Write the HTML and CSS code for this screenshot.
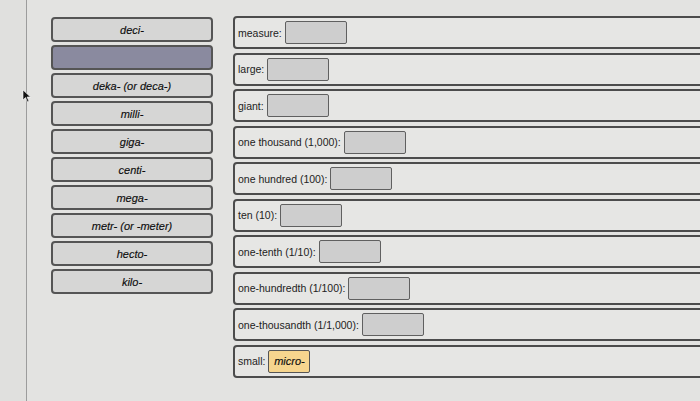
FILE: index.html
```html
<!DOCTYPE html>
<html>
<head>
<meta charset="utf-8">
<link rel="stylesheet" href="styles.css">
</head>
<body>
<div class="page">
  <div class="rail"></div>
  <div class="tiles">
    <div class="tile">deci-</div>
    <div class="tile dark"></div>
    <div class="tile">deka- (or deca-)</div>
    <div class="tile">milli-</div>
    <div class="tile">giga-</div>
    <div class="tile">centi-</div>
    <div class="tile">mega-</div>
    <div class="tile">metr- (or -meter)</div>
    <div class="tile">hecto-</div>
    <div class="tile">kilo-</div>
  </div>
  <div class="rows">
    <div class="row"><span class="label">measure:</span><span class="slot"></span></div>
    <div class="row"><span class="label">large:</span><span class="slot"></span></div>
    <div class="row"><span class="label">giant:</span><span class="slot"></span></div>
    <div class="row"><span class="label">one thousand (1,000):</span><span class="slot"></span></div>
    <div class="row"><span class="label">one hundred (100):</span><span class="slot"></span></div>
    <div class="row"><span class="label">ten (10):</span><span class="slot"></span></div>
    <div class="row"><span class="label">one-tenth (1/10):</span><span class="slot"></span></div>
    <div class="row"><span class="label">one-hundredth (1/100):</span><span class="slot"></span></div>
    <div class="row"><span class="label">one-thousandth (1/1,000):</span><span class="slot"></span></div>
    <div class="row"><span class="label">small:</span><span class="slot filled">micro-</span></div>
  </div>
</div>
<svg class="cursor" width="10" height="14" viewBox="0 0 10 14"><path d="M1 1 L1 11 L3.5 8.5 L5.5 13 L7 12.3 L5 8 L8.5 8 Z" fill="#111" stroke="#fff" stroke-width="0.6"/></svg>
</body>
</html>
```
FILE: styles.css
```css
html, body {
  margin: 0;
  padding: 0;
  background: #e3e3e1;
  overflow: hidden;
  width: 700px;
  height: 401px;
  font-family: "Liberation Sans", Arial, sans-serif;
  color: #1e1e1e;
}
.page {
  display: flex;
  align-items: flex-start;
  height: 401px;
  position: relative;
}
.rail {
  width: 26px;
  height: 401px;
  border-right: 1px solid #9c9c9c;
  background: #e0e0de;
  flex: none;
}
.tiles {
  margin-left: 24px;
  margin-top: 17px;
  width: 162px;
  display: flex;
  flex-direction: column;
  gap: 3px;
  flex: none;
}
.tile {
  height: 25px;
  box-sizing: border-box;
  border: 2px solid #555;
  border-radius: 4px;
  background: #d6d6d5;
  font-size: 11px;
  font-style: italic;
  color: #0e0e0e;
  display: flex;
  align-items: center;
  justify-content: center;
  -webkit-text-stroke: 0.15px #0e0e0e;
}
.tile.dark {
  background: #8a8a9f;
}
.rows {
  margin-left: 20px;
  margin-top: 16px;
  width: 500px;
  display: flex;
  flex-direction: column;
  gap: 3.5px;
  flex: none;
}
.row {
  height: 33px;
  box-sizing: border-box;
  border: 2px solid #4c4c4c;
  border-radius: 4px;
  background: #e6e6e4;
  display: flex;
  align-items: center;
  padding-left: 3px;
  gap: 3px;
  font-size: 10.5px;
  color: #222;
}
.slot {
  width: 62px;
  height: 23px;
  box-sizing: border-box;
  border: 1.5px solid #606060;
  border-radius: 2px;
  background: #cecece;
}
.slot.filled {
  width: 42px;
  background: #f6d58e;
  border-color: #555;
  font-style: italic;
  font-size: 11px;
  color: #0e0e0e;
  -webkit-text-stroke: 0.15px #0e0e0e;
  display: flex;
  align-items: center;
  justify-content: center;
}
.cursor {
  position: absolute;
  left: 22px;
  top: 89px;
}
```
